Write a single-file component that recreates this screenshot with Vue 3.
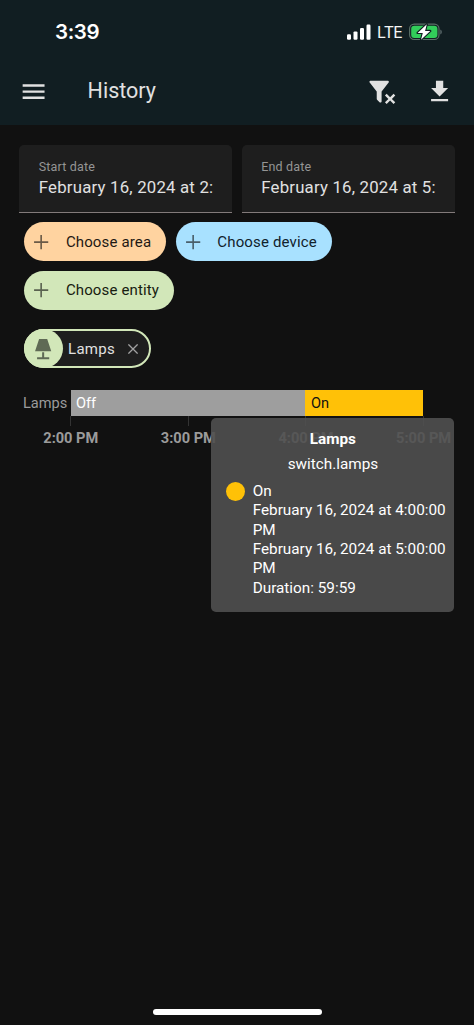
<script setup>
const fields = [
  { label: 'Start date', value: 'February 16, 2024 at 2:' },
  { label: 'End date', value: 'February 16, 2024 at 5:' },
]
const choosers = [
  { kind: 'area', label: 'Choose area' },
  { kind: 'device', label: 'Choose device' },
  { kind: 'entity', label: 'Choose entity' },
]
const ticks = ['2:00 PM', '3:00 PM', '4:00 PM', '5:00 PM']
</script>

<template>
  <div class="screen">
    <header class="top">
      <div class="status">
        <span class="clock">3:39</span>
        <div class="indicators">
          <svg class="signal" width="24" height="16" viewBox="0 0 24 16" fill="#fff">
            <rect x="0" y="10.2" width="4" height="5.6" rx="1.2" />
            <rect x="6.5" y="7.4" width="4" height="8.4" rx="1.2" />
            <rect x="13" y="4" width="4" height="11.8" rx="1.2" />
            <rect x="19.5" y="0.5" width="4" height="15.3" rx="1.2" />
          </svg>
          <span class="lte">LTE</span>
          <svg class="battery" width="34" height="18" viewBox="0 0 34 18">
            <rect x="0.6" y="1.1" width="29.4" height="15.4" rx="4.6" fill="none" stroke="#5c7068" stroke-width="1.1" />
            <rect x="2.2" y="2.7" width="26.2" height="12.2" rx="3.2" fill="#32cd5a" />
            <path d="M31.3 6.4c2 .8 2 4.2 0 5z" fill="#5c6a6c" />
            <path d="M17.8 1.2 8.6 9.9h5.2L12 16.8l9.3-8.9h-5.2z" fill="#fff" stroke="#111e22" stroke-width="2.2" paint-order="stroke" stroke-linejoin="round" />
          </svg>
        </div>
      </div>
      <div class="toolbar">
        <svg class="icon" viewBox="0 0 24 24"><path d="M3,6H21V8H3V6M3,11H21V13H3V11M3,16H21V18H3V16Z" /></svg>
        <h1 class="title">History</h1>
        <svg class="icon filter" viewBox="0 0 24 24"><path d="M14.76,20.83L17.6,18L14.76,15.17L16.17,13.76L19,16.57L21.83,13.76L23.24,15.17L20.43,18L23.24,20.83L21.83,22.24L19,19.4L16.17,22.24L14.76,20.83M12,12V19.88C12.04,20.18 11.94,20.5 11.71,20.71C11.32,21.1 10.69,21.1 10.3,20.71L8.29,18.7C8.06,18.47 7.96,18.16 8,17.87V12H7.97L2.21,4.62C1.87,4.19 1.95,3.56 2.38,3.22C2.57,3.08 2.78,3 3,3V3H17V3C17.22,3 17.43,3.08 17.62,3.22C18.05,3.56 18.13,4.19 17.79,4.62L12.03,12H12Z" /></svg>
        <svg class="icon" viewBox="0 0 24 24"><path d="M5,20H19V18H5M19,9H15V3H9V9H5L12,16L19,9Z" /></svg>
      </div>
    </header>

    <main>
      <div class="fields">
        <div v-for="f in fields" :key="f.label" class="field">
          <span class="label">{{ f.label }}</span>
          <span class="value">{{ f.value }}</span>
        </div>
      </div>

      <div class="chips">
        <button v-for="c in choosers" :key="c.kind" class="chip" :class="c.kind">
          <svg class="plus" viewBox="0 0 24 24"><path d="M19,12.8H12.8V19H11.2V12.8H5V11.2H11.2V5H12.8V11.2H19Z" /></svg>
          <span>{{ c.label }}</span>
        </button>
      </div>

      <div class="selected">
        <span class="disc"><svg viewBox="0 0 24 24"><path d="M8,2H16L20,14H4L8,2M11,15H13V20H18V22H6V20H11V15Z" /></svg></span>
        <span class="name">Lamps</span>
        <svg class="close" viewBox="0 0 10 10"><path d="M.4.4 9.6 9.6M9.6.4.4 9.6" /></svg>
      </div>

      <section class="chart">
        <div class="row">
          <span class="row-name">Lamps</span>
          <div class="bar">
            <span class="off">Off</span>
            <span class="on">On</span>
          </div>
        </div>
        <div class="axis">
          <div v-for="t in ticks" :key="t" class="tick"><span>{{ t }}</span></div>
        </div>
        <div class="tooltip">
          <strong>Lamps</strong>
          <div class="entity-id">switch.lamps</div>
          <div class="detail">
            <i class="dot"></i>
            <div>On<br />February 16, 2024 at 4:00:00<br />PM<br />February 16, 2024 at 5:00:00<br />PM<br />Duration: 59:59</div>
          </div>
        </div>
      </section>
    </main>
    <div class="home"></div>
  </div>
</template>

<style>
body { margin: 0; background: #111; }
</style>

<style scoped>
.screen {
  position: relative;
  width: 474px;
  height: 1025px;
  overflow: hidden;
  background: #111;
  color: #e1e1e1;
  font-family: Roboto, sans-serif;
  display: flex;
  flex-direction: column;
}
.top { height: 125px; background: #111e22; }
.status { height: 57px; display: flex; justify-content: space-between; align-items: flex-start; padding: 0 31px 0 55px; }
.clock { font: 600 20.5px/24px Inter, sans-serif; letter-spacing: -.4px; color: #fff; margin-top: 20px; }
.indicators { display: flex; align-items: center; height: 18px; margin-top: 23px; }
.lte { font: 400 16px/18px Inter, sans-serif; letter-spacing: -.8px; color: #f4f6f6; margin-left: 6px; width: 25px; }
.signal { margin-top: -1px; }
.battery { margin-left: 7px; }
.toolbar { display: flex; align-items: center; height: 68.6px; padding: 0 19.4px; }
.icon { width: 29.2px; height: 29.2px; fill: #e1e1e1; flex: none; }
.title { font-size: 21.5px; font-weight: 400; line-height: 28px; margin: 0 0 0 39px; flex: 1; }
.filter { margin-right: 29.2px; }
main { padding: 19.6px 19.4px 0; }
.fields { display: flex; gap: 9.7px; }
.field { flex: 1; min-width: 0; height: 68px; box-sizing: border-box; background: #1e1e1e; border-bottom: 1.3px solid #827a7a; border-radius: 5px 5px 0 0; padding: 13.2px 19.4px 0; display: flex; flex-direction: column; white-space: nowrap; }
.label { font-size: 12.5px; line-height: 18px; color: #959595; letter-spacing: .16px; }
.value { font-size: 16.8px; line-height: 22px; letter-spacing: .2px; }
.chips { display: flex; flex-wrap: wrap; gap: 9.7px; padding: 9.7px 4.8px 0; }
.chip { height: 38.9px; border: 0; border-radius: 20px; display: flex; align-items: center; padding: 0 14.8px 0 5px; font: 400 15px/20px Roboto, sans-serif; letter-spacing: .14px; color: #1e1914; }
.plus { width: 24.3px; height: 24.3px; margin-right: 12.4px; fill: #111; opacity: .62; }
.area { background: #ffd3a0; }
.device { background: #a8e1ff; color: #10222c; }
.entity { background: #d2e7b9; color: #172010; }
.selected { box-sizing: border-box; width: 127px; height: 38.9px; margin: 19.5px 0 0 4.8px; border-radius: 20px; border: 2.4px solid #d2e7b9; background: #1e1e1e; display: flex; align-items: center; }
.disc { width: 38.9px; height: 38.9px; margin-left: -2px; border-radius: 50%; background: #d2e7b9; display: flex; align-items: center; justify-content: center; flex: none; }
.disc svg { width: 24.3px; height: 24.3px; fill: #5f6a55; }
.name { font-size: 15px; letter-spacing: .25px; margin-left: 5px; width: 60.4px; padding-top: 1px; }
.close { width: 10px; height: 10px; margin-top: 1px; stroke: #a2a2a2; stroke-width: 1.3; fill: none; }
.chart { position: relative; margin-top: 22px; }
.row { display: flex; align-items: center; height: 26px; }
.row-name { box-sizing: border-box; width: 51.2px; padding-left: 3.6px; font-size: 14.6px; color: #9b9b9b; flex: none; }
.bar { display: flex; width: 352.5px; height: 26px; font-size: 14.6px; line-height: 26px; }
.off { width: 234.8px; background: #9e9e9e; color: #fff; box-sizing: border-box; padding-left: 5.4px; }
.on { flex: 1; background: #ffc107; color: #111; padding-left: 5.5px; }
.axis { display: grid; grid-template-columns: repeat(4, 117.6px); margin-left: -7.4px; }
.tick { display: flex; flex-direction: column; align-items: center; font-size: 14.6px; font-weight: 700; line-height: 18px; color: #9b9b9b; }
.tick::before { content: ''; width: 1px; height: 10px; background: #333; margin-bottom: 3px; }
.tooltip { position: absolute; left: 192px; top: 28px; width: 243px; height: 194px; box-sizing: border-box; border-radius: 5px; background: rgba(80, 80, 80, .9); color: #fff; padding: 12px 0 0; font-size: 15.3px; line-height: 19.45px; text-align: center; white-space: nowrap; }
.tooltip strong { display: block; font-weight: 700; }
.entity-id { margin-top: 5px; }
.detail { display: flex; text-align: left; margin: 7.6px 0 0 14.2px; }
.dot { width: 19.5px; height: 19.5px; border-radius: 50%; background: #ffc107; margin-right: 7.6px; flex: none; }
.home { position: absolute; left: 152.5px; bottom: 10px; width: 169.5px; height: 6px; border-radius: 3px; background: #fff; }
</style>
